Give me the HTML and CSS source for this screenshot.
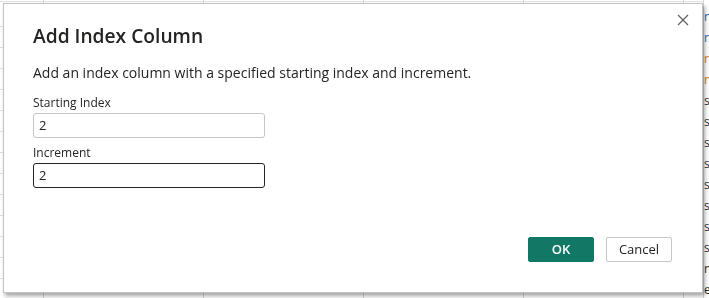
FILE: index.html
```html
<!DOCTYPE html>
<html>
<head>
<meta charset="utf-8">
<link rel="stylesheet" href="styles.css">
</head>
<body>
<div class="sheet">
  <div class="edge">
    <span class="c1">n</span><span class="c1">n</span><span class="c2">n</span><span class="c2">n</span><span>s</span><span>s</span><span>s</span><span>s</span><span>s</span><span>s</span><span>s</span><span>s</span><span>n</span><span>e</span><span>c</span><span>c</span>
  </div>
</div>
<div class="dialog" role="dialog">
  <button class="close" aria-label="Close">
    <svg width="12" height="12" viewBox="0 0 12 12"><path d="M1 1L11 11M11 1L1 11" stroke="#5f5f5f" stroke-width="1.2" fill="none"/></svg>
  </button>
  <h1 class="title">Add Index Column</h1>
  <p class="desc">Add an index column with a specified starting index and increment.</p>
  <div class="field first">
    <label class="label">Starting Index</label>
    <div class="input">2</div>
  </div>
  <div class="field second">
    <label class="label">Increment</label>
    <div class="input focused">2</div>
  </div>
  <div class="actions">
    <button class="btn primary">OK</button>
    <button class="btn secondary">Cancel</button>
  </div>
</div>
</body>
</html>
```
FILE: styles.css
```css
html, body {
  margin: 0;
  padding: 0;
}
body {
  width: 709px;
  height: 298px;
  overflow: hidden;
  font-family: "Open Sans", "Noto Sans", sans-serif;
  background-color: #ffffff;
  background-image:
    repeating-linear-gradient(to right, transparent 0, transparent 42px, #d6d6d6 42px, #d6d6d6 43px, transparent 43px, transparent 160px),
    repeating-linear-gradient(to bottom, transparent 0, transparent 20px, #e1e1e1 20px, #e1e1e1 21px);
  background-position: 1px 0, 0 6px;
}
.sheet {
  display: flex;
  justify-content: flex-end;
  height: 298px;
}
.edge {
  width: 5px;
  display: flex;
  flex-direction: column;
  padding-top: 6px;
  font-size: 12px;
  line-height: 21px;
  color: #333;
  overflow: hidden;
  background: #fff;
  border-left: 1px solid #d6d6d6;
}
.edge .c1 { color: #2a6fb5; }
.edge .c2 { color: #d2842b; }
.dialog {
  position: fixed;
  left: 3px;
  top: 3px;
  width: 700px;
  height: 290px;
  box-sizing: border-box;
  background: #fff;
  border: 1px solid #c2c2c2;
  box-shadow: 2px 3px 4px rgba(0,0,0,0.35);
  padding: 18px 30px 0 29px;
  display: flex;
  flex-direction: column;
  color: #252423;
}
.close {
  position: absolute;
  right: 11px;
  top: 8px;
  width: 16px;
  height: 16px;
  padding: 0;
  border: 0;
  background: none;
  display: flex;
  align-items: center;
  justify-content: center;
}
.title {
  margin: 0;
  font-size: 19.2px;
  font-weight: 600;
  line-height: 28px;
}
.desc {
  margin: 13px 0 0 0;
  font-size: 14px;
  line-height: 19px;
}
.field {
  display: flex;
  flex-direction: column;
}
.field.first { margin-top: 13px; }
.field.second { margin-top: 7px; }
.label {
  font-size: 12px;
  line-height: 16px;
  margin-bottom: 2px;
}
.input {
  width: 232px;
  height: 25px;
  box-sizing: border-box;
  border: 1px solid #c6c6c6;
  border-radius: 3px;
  padding: 0 5px;
  font-size: 13px;
  line-height: 23px;
  color: #252423;
}
.input.focused {
  border: 1.5px solid #252423;
  line-height: 22px;
}
.actions {
  margin-top: auto;
  margin-bottom: 30px;
  display: flex;
  justify-content: flex-end;
  gap: 12px;
}
.btn {
  height: 25px;
  box-sizing: border-box;
  border-radius: 2px;
  font-family: "Open Sans", "Noto Sans", sans-serif;
  font-size: 13px;
  padding: 0;
  line-height: 23px;
}
.primary {
  width: 66px;
  background: #117865;
  border: 1px solid #117865;
  color: #fff;
  font-weight: 600;
}
.secondary {
  width: 66px;
  background: #fff;
  border: 1px solid #c6c6c6;
  color: #252423;
}
```
